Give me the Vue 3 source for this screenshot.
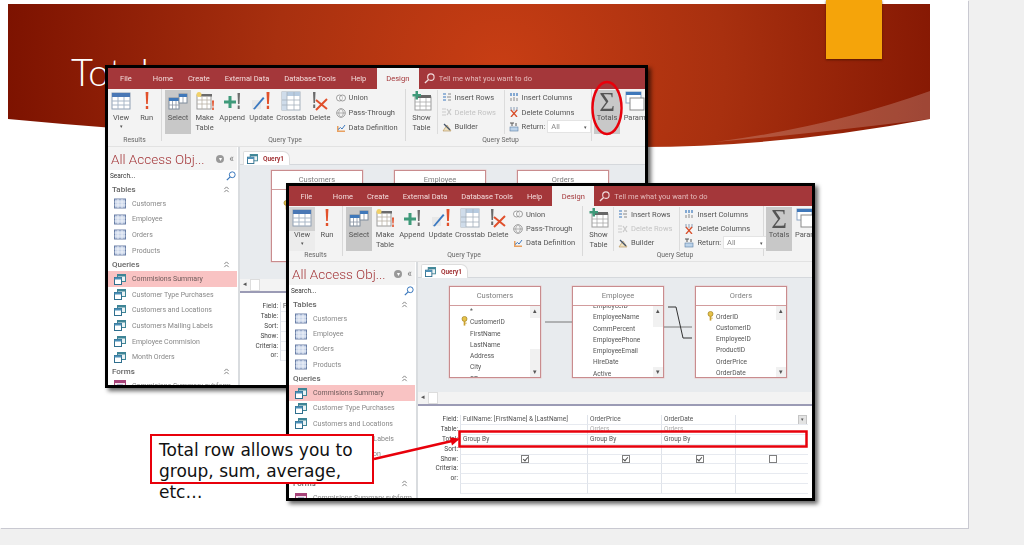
<template>
  <div class="page">
    <svg class="defs" width="0" height="0" aria-hidden="true">
      <symbol id="i-view" viewBox="0 0 20 20"><rect x="1" y="2" width="18" height="16" fill="#fff" stroke="#8f9fb3"/><rect x="1" y="2" width="18" height="4" fill="#4a78b5"/><path d="M1 10h18M1 14h18M7 6v12M13 6v12" stroke="#a9b7c7"/></symbol>
      <symbol id="i-run" viewBox="0 0 20 20"><path d="M8.6 1h2.8l-.6 12H9.2z" fill="#e2512b"/><rect x="8.8" y="15" width="2.4" height="3" fill="#e2512b"/></symbol>
      <symbol id="i-select" viewBox="0 0 20 20"><rect x="1" y="7" width="10" height="11" fill="#fff" stroke="#7f8c9b"/><rect x="1" y="7" width="10" height="3" fill="#3f78ba"/><path d="M4.500 10v8M8 10v8M1 14h10" stroke="#8a96a3" stroke-width=".8"/><rect x="11" y="3" width="8" height="9" fill="#fff" stroke="#7f8c9b"/><rect x="11" y="3" width="8" height="3" fill="#3f78ba"/><path d="M15 6v6" stroke="#8a96a3" stroke-width=".8"/></symbol>
      <symbol id="i-make" viewBox="0 0 20 20"><rect x="2" y="4" width="14" height="14" fill="#fff" stroke="#9b9b9b"/><rect x="5" y="3" width="12" height="2.500" fill="#6b6b6b"/><path d="M2 9h14M2 13h14M7 5v13M12 5v13" stroke="#b9b1a4" stroke-width=".8"/><circle cx="4" cy="3.500" r="2.500" fill="#f1d169"/><path d="M17 9.500h2l-.4 6h-1.200zM17.200 16.500h1.600V19h-1.600z" fill="#e2512b"/></symbol>
      <symbol id="i-append" viewBox="0 0 20 20"><path d="M6.500 5h3v4.500H14v3H9.500V17h-3v-4.500H2v-3h4.500z" fill="#3f9a7a"/><path d="M15.500 2h2.500l-.5 11h-1.500zM15.700 14.500h2V18h-2z" fill="#6d6d6d"/></symbol>
      <symbol id="i-update" viewBox="0 0 20 20"><rect x="1" y="9" width="9" height="9" fill="#e8e8e8"/><path d="M2 18L12 6l1.500 1.300L3.800 18.500z" fill="#3a78c0"/><path d="M15.500 1h3l-.6 12h-1.800zM15.800 14.800h2.300V18h-2.300z" fill="#e2512b"/></symbol>
      <symbol id="i-cross" viewBox="0 0 20 20"><rect x="1" y="1" width="18" height="18" fill="#fff" stroke="#a6b1bd"/><rect x="1" y="1" width="18" height="4" fill="#b7cbe0"/><rect x="1" y="1" width="5" height="18" fill="#cfdcea"/><path d="M1 9h18M1 14h18M6 1v18M13 1v18" stroke="#a6b1bd" stroke-width=".8"/></symbol>
      <symbol id="i-delete" viewBox="0 0 20 20"><path d="M3 1h2.500L5 12H3.500zM3.200 13.500h2V17h-2z" fill="#6a6a6a"/><path d="M6 9l11 9M17 8L6 19" stroke="#e0502c" stroke-width="2"/></symbol>
      <symbol id="i-union" viewBox="0 0 10 10"><circle cx="3.500" cy="5" r="3" fill="#fff" stroke="#888" stroke-width=".8"/><circle cx="6.500" cy="5" r="3" fill="#fff" fill-opacity=".4" stroke="#888" stroke-width=".8"/></symbol>
      <symbol id="i-pass" viewBox="0 0 10 10"><circle cx="5" cy="5" r="4.300" fill="#f1f1f1" stroke="#8b8b8b" stroke-width=".8"/><path d="M.700 5h8.600M5 .700c-3 2.500-3 6 0 8.600M5 .700c3 2.500 3 6 0 8.600" stroke="#8b8b8b" fill="none" stroke-width=".6"/></symbol>
      <symbol id="i-def" viewBox="0 0 10 10"><path d="M1 9V3h1.500v4.500H9V9z" fill="#e8a060"/><path d="M2 6.500L4.500 4.500 6 6l3-4" stroke="#3b78bd" fill="none"/></symbol>
      <symbol id="i-show" viewBox="0 0 20 20"><rect x="3" y="6" width="16" height="13" fill="#fff" stroke="#9d9d9d"/><rect x="6" y="4" width="13" height="3" fill="#666"/><path d="M3 11h16M3 15h16M8 7v12M14 7v12" stroke="#a9a9a9" stroke-width=".8"/><path d="M3.500 0h2.500v3h3v2.500H6v3H3.500v-3h-3V3h3z" fill="#3f9a7a"/></symbol>
      <symbol id="i-insrow" viewBox="0 0 10 10"><path d="M1 2h3M1 5h3M1 8h3" stroke="#3a78bd" stroke-width="1.200"/><path d="M9 2H6M9 5H5M9 8H6" stroke="#8a8a8a"/></symbol>
      <symbol id="i-delrow" viewBox="0 0 10 10"><path d="M0 2h4M0 5h4M0 8h4" stroke="#ccc" stroke-width="1.200"/><path d="M5 2l4 6M9 2L5 8" stroke="#c8c8c8" stroke-width="1.200"/></symbol>
      <symbol id="i-builder" viewBox="0 0 10 10"><path d="M1 9l4-6 4 6z" fill="#efe2c0" stroke="#b38f52" stroke-width=".6"/><path d="M2 2l6 6" stroke="#44546a" stroke-width="1.200"/></symbol>
      <symbol id="i-inscol" viewBox="0 0 10 10"><path d="M2 1v3M5 1v3M8 1v3" stroke="#3a78bd" stroke-width="1.200"/><path d="M2 6v3M8 6v3M5 5v4" stroke="#8a8a8a"/></symbol>
      <symbol id="i-delcol" viewBox="0 0 10 10"><path d="M2 0v4M5 0v4M8 0v4" stroke="#8a9fb8"/><path d="M2 3l6 7M8 3l-6 7" stroke="#d8502c" stroke-width="1.300"/></symbol>
      <symbol id="i-ret" viewBox="0 0 10 10"><path d="M1 1h4M3 1v3" stroke="#555" stroke-width="1"/><rect x="1" y="5" width="8" height="4" fill="#bcd3ea" stroke="#5b7fa6" stroke-width=".6"/><path d="M7 1v3" stroke="#555"/></symbol>
      <symbol id="i-param" viewBox="0 0 20 20"><rect x="1" y="1" width="15" height="11" fill="#fff" stroke="#8da6c4"/><rect x="1" y="1" width="15" height="3" fill="#3f78ba"/><rect x="5" y="7" width="14" height="12" fill="#fff" stroke="#8a8a8a"/></symbol>
      <symbol id="i-nav-table" viewBox="0 0 12 10"><rect x=".5" y=".5" width="11" height="9" fill="#c9d5ea" stroke="#6a7fa6"/><path d="M4 .500v9M8 .500v9M.500 3.500h11M.500 6.500h11" stroke="#f4f6fa" stroke-width=".8"/></symbol>
      <symbol id="i-nav-query" viewBox="0 0 12 11"><rect x="3.500" y=".5" width="8" height="7" fill="#eaf2f4" stroke="#3f8596"/><rect x="3.500" y=".5" width="8" height="2" fill="#3f8596"/><rect x=".5" y="3.500" width="7" height="7" fill="#fff" stroke="#2f6f8e"/><rect x=".5" y="3.500" width="7" height="2" fill="#4c90b8"/></symbol>
      <symbol id="i-nav-form" viewBox="0 0 12 11"><rect x=".5" y=".5" width="11" height="10" fill="#f3e3ec" stroke="#a8447a"/><rect x=".5" y=".5" width="11" height="2.500" fill="#a8447a"/><path d="M3 5h6M3 7.500h6" stroke="#6c7fb0"/></symbol>
      <symbol id="i-key" viewBox="0 0 8 12"><circle cx="4" cy="3.500" r="3" fill="#e6c24a" stroke="#9c7d1e" stroke-width=".8"/><rect x="3" y="6" width="2" height="5.500" fill="#c9a02f"/><rect x="5" y="8" width="1.500" height="1.200" fill="#c9a02f"/></symbol>
      <symbol id="i-search" viewBox="0 0 12 12"><circle cx="7.500" cy="4.500" r="3.500" fill="none" stroke="currentColor" stroke-width="1.200"/><path d="M5 7L1 11" stroke="currentColor" stroke-width="1.500"/></symbol>
      <symbol id="i-fold" viewBox="0 0 8 8"><path d="M1.500 3.500L4 1l2.500 2.500M1.500 7L4 4.500 6.500 7" fill="none" stroke="#777" stroke-width="1"/></symbol>
    </svg>

    <div class="slide">
      <svg class="banner" width="968" height="160" viewBox="0 0 968 160">
        <defs>
          <radialGradient id="bannerFill" gradientUnits="userSpaceOnUse" cx="500" cy="70" r="500">
            <stop offset="0" stop-color="#c83e14" />
            <stop offset=".45" stop-color="#a8300f" />
            <stop offset="1" stop-color="#7c1200" />
          </radialGradient>
        </defs>
        <path d="M8 4H930V119Q780 147 640 147Q300 147 8 119Z" fill="url(#bannerFill)" />
        <path d="M930 91Q830 127 715 142Q800 135 930 119Z" fill="#fff" fill-opacity=".2" />
      </svg>
      <h1 class="slide-title">Totals</h1>
      <div class="bookmark"></div>

      <section v-for="win in windows" :key="win.id" class="win" :class="win.id">
        <div class="menubar">
          <span v-for="tab in menuTabs" :key="tab" class="menu-tab">{{ tab }}</span>
          <span class="menu-tab active">Design</span>
          <span class="tell">
            <svg class="tell-icon" width="11" height="11"><use href="#i-search" /></svg>
            Tell me what you want to do
          </span>
        </div>

        <div class="ribbon">
          <div v-for="group in ribbonGroups" :key="group.name + group.cls" class="group" :class="group.cls">
            <div class="group-items">
              <template v-for="item in group.items" :key="item.label || item.rows[0].label">
                <div v-if="item.rows" class="small-col" :class="item.cls">
                  <div v-for="row in item.rows" :key="row.label" class="small-row" :class="{ off: row.off }">
                    <svg width="10" height="10"><use :href="'#' + row.icon" /></svg>
                    <span>{{ row.label }}</span>
                    <span v-if="row.combo" class="combo">All<i>▾</i></span>
                  </div>
                </div>
                <button v-else class="big" :class="{ on: item.on, split: item.menu }" :style="{ width: item.w + 'px' }">
                  <span v-if="item.sigma" class="sigma">Σ</span>
                  <svg v-else width="20" height="20"><use :href="'#' + item.icon" /></svg>
                  <span class="big-label">{{ item.label }}<br v-if="item.second" />{{ item.second }}</span>
                  <i v-if="item.menu" class="caret">▾</i>
                </button>
              </template>
            </div>
            <div class="group-name">{{ group.name }}</div>
          </div>
        </div>

        <div class="body">
          <aside class="nav">
            <div class="nav-head">
              <span class="nav-title">All Access Obj...</span>
              <span class="nav-dot">▾</span>
              <span class="nav-collapse">«</span>
            </div>
            <div class="nav-search">
              <span>Search...</span>
              <svg width="10" height="10"><use href="#i-search" /></svg>
            </div>
            <template v-for="section in navSections" :key="section.name">
              <div class="nav-section">
                <span>{{ section.name }}</span>
                <svg width="7" height="7"><use href="#i-fold" /></svg>
              </div>
              <div
                v-for="obj in section.items"
                :key="obj"
                class="nav-item"
                :class="{ current: obj === 'Commisions Summary' }"
              >
                <svg width="12" height="11"><use :href="'#' + section.icon" /></svg>
                <span>{{ obj }}</span>
              </div>
            </template>
          </aside>

          <div class="main">
            <div class="tabstrip">
              <div class="doc-tab">
                <svg width="11" height="10"><use href="#i-nav-query" /></svg>
                <span>Query1</span>
              </div>
            </div>

            <div class="canvas">
              <div v-for="table in queryTables" :key="table.name" class="qtable">
                <div class="qtable-title">{{ table.name }}</div>
                <div class="qtable-body">
                  <ul class="fields" :style="{ marginTop: table.offset + 'px' }">
                    <li v-for="f in table.fields" :key="f">
                      <svg v-if="f === table.key" class="key" width="7" height="10"><use href="#i-key" /></svg>
                      {{ f }}
                    </li>
                  </ul>
                  <div class="vscroll">
                    <span class="arrow">▴</span>
                    <span class="thumb" :class="table.thumb"></span>
                    <span class="arrow">▾</span>
                  </div>
                </div>
              </div>
              <svg class="joins" width="400" height="110" viewBox="0 0 400 110">
                <path d="M127 44H154M246 49H274" fill="none" stroke="#777" stroke-width="1" />
                <path d="M250 29H258L265 60H274" fill="none" stroke="#333" stroke-width="1" />
              </svg>
            </div>

            <div class="hscroll"><span class="arrow">◂</span><span class="hthumb"></span></div>

            <div class="qbe">
              <div v-for="row in win.rows" :key="row.label" class="qbe-row">
                <span class="qbe-label">{{ row.label }}</span>
                <span v-for="(cell, i) in 4" :key="cell" class="qbe-cell" :class="{ dim: row.dim }">
                  <span v-if="row.checks" class="check" :class="{ checked: row.checks[i] }"></span>
                  <template v-else>{{ row.cells ? row.cells[i] : '' }}</template>
                  <i v-if="row.drop && i === 3" class="drop">▾</i>
                </span>
              </div>
            </div>
          </div>
        </div>
      </section>

      <svg class="marks" width="968" height="528" viewBox="0 0 968 528">
        <ellipse cx="607" cy="108" rx="14.500" ry="26" fill="none" stroke="#e8000b" stroke-width="2.500" />
        <rect x="459.500" y="431.500" width="347" height="15" fill="none" stroke="#e8000b" stroke-width="2.500" />
        <path d="M374 459L452 441" stroke="#e8000b" stroke-width="2.500" />
        <path d="M460 438.500L450 437.500L452 445.500Z" fill="#e8000b" />
      </svg>
      <div class="callout">Total row allows you to group, sum, average, etc…</div>
    </div>
  </div>
</template>

<script setup>
const menuTabs = ['File', 'Home', 'Create', 'External Data', 'Database Tools', 'Help']

const ribbonGroups = [
  {
    name: 'Results',
    cls: 'g-results',
    items: [
      { label: 'View', icon: 'i-view', w: 26, menu: true },
      { label: 'Run', icon: 'i-run', w: 22 }
    ]
  },
  {
    name: 'Query Type',
    cls: 'g-type',
    items: [
      { label: 'Select', icon: 'i-select', w: 26, on: true },
      { label: 'Make', second: 'Table', icon: 'i-make', w: 24 },
      { label: 'Append', icon: 'i-append', w: 28 },
      { label: 'Update', icon: 'i-update', w: 27 },
      { label: 'Crosstab', icon: 'i-cross', w: 30 },
      { label: 'Delete', icon: 'i-delete', w: 24 },
      {
        rows: [
          { label: 'Union', icon: 'i-union' },
          { label: 'Pass-Through', icon: 'i-pass' },
          { label: 'Data Definition', icon: 'i-def' }
        ]
      }
    ]
  },
  {
    name: 'Query Setup',
    cls: 'g-setup',
    items: [
      { label: 'Show', second: 'Table', icon: 'i-show', w: 23 },
      {
        cls: 'divided',
        rows: [
          { label: 'Insert Rows', icon: 'i-insrow' },
          { label: 'Delete Rows', icon: 'i-delrow', off: true },
          { label: 'Builder', icon: 'i-builder' }
        ]
      },
      {
        cls: 'divided',
        rows: [
          { label: 'Insert Columns', icon: 'i-inscol' },
          { label: 'Delete Columns', icon: 'i-delcol' },
          { label: 'Return:', icon: 'i-ret', combo: true }
        ]
      }
    ]
  },
  {
    name: '',
    cls: 'g-show',
    items: [
      { label: 'Totals', sigma: true, w: 26, on: true },
      { label: 'Param', icon: 'i-param', w: 26 }
    ]
  }
]

const navSections = [
  { name: 'Tables', icon: 'i-nav-table', items: ['Customers', 'Employee', 'Orders', 'Products'] },
  {
    name: 'Queries',
    icon: 'i-nav-query',
    items: [
      'Commisions Summary',
      'Customer Type Purchases',
      'Customers and Locations',
      'Customers Mailing Labels',
      'Employee Commision',
      'Month Orders'
    ]
  },
  { name: 'Forms', icon: 'i-nav-form', items: ['Commisions Summary subform'] }
]

const queryTables = [
  {
    name: 'Customers',
    offset: 0,
    key: 'CustomerID',
    thumb: 'thumb-top',
    fields: ['*', 'CustomerID', 'FirstName', 'LastName', 'Address', 'City', 'ST']
  },
  {
    name: 'Employee',
    offset: -5,
    key: '',
    thumb: 'thumb-low',
    fields: ['EmployeeID', 'EmployeeName', 'CommPercent', 'EmployeePhone', 'EmployeeEmail', 'HireDate', 'Active']
  },
  {
    name: 'Orders',
    offset: 5.5,
    key: 'OrderID',
    thumb: 'thumb-full',
    fields: ['OrderID', 'CustomerID', 'EmployeeID', 'ProductID', 'OrderPrice', 'OrderDate']
  }
]

const fieldRow = { label: 'Field:', cells: ['FullName: [FirstName] & [LastName]', 'OrderPrice', 'OrderDate', ''], drop: true }
const tableRow = { label: 'Table:', cells: ['', 'Orders', 'Orders', ''], dim: true }
const totalRow = { label: 'Total:', cells: ['Group By', 'Group By', 'Group By', ''] }
const sortRow = { label: 'Sort:' }
const showRow = { label: 'Show:', checks: [true, true, true, false] }
const criteriaRow = { label: 'Criteria:' }
const orRow = { label: 'or:' }

const windows = [
  { id: 'win-back', rows: [fieldRow, tableRow, sortRow, showRow, criteriaRow, orRow] },
  { id: 'win-front', rows: [fieldRow, tableRow, totalRow, sortRow, showRow, criteriaRow, orRow, { label: '' }] }
]
</script>

<style scoped>
.page {
  position: relative;
  width: 1024px;
  height: 545px;
  overflow: hidden;
  background: #f0f0f0;
  font-family: Roboto, "Liberation Sans", sans-serif;
}

.defs {
  position: absolute;
}

.slide {
  position: relative;
  width: 968px;
  height: 528px;
  background: #fff;
  box-shadow: 1px 1px 0 #c9c9d1;
}

.banner {
  position: absolute;
  left: 0;
  top: 0;
}

.slide-title {
  position: absolute;
  left: 71px;
  top: 48px;
  margin: 0;
  font-family: Lato, "Open Sans", sans-serif;
  font-size: 38px;
  font-weight: 300;
  color: #fff;
}

.bookmark {
  position: absolute;
  left: 826px;
  top: 0;
  width: 56px;
  height: 59px;
  background: #f5a40a;
  box-shadow: 0 1px 2px rgba(70, 20, 0, 0.8);
}

/* the two pasted Access screenshots */
.win {
  position: absolute;
  box-sizing: border-box;
  display: flex;
  flex-direction: column;
  overflow: hidden;
  border: 3px solid #000;
  background: #f3f3f3;
  color: #555;
  font-size: 7.5px;
  filter: blur(0.4px) drop-shadow(3px 3px 2px rgba(0, 0, 0, 0.6));
}

.win-back {
  left: 105px;
  top: 65px;
  width: 543px;
  height: 323px;
  --bar: 21px;
  --ribbon: 58px;
  --strip: 18px;
  --nav: 132px;
  --item: 15.6px;
  --small: 15px;
  --gap: 1.6px;
  --g1: 54px;
  --g2: 244px;
  --g3: 186px;
  --card-top: 5px;
  --qbe-top: 9px;
  --label: 40px;
  --tab-pad: 7.5px;
}

.win-front {
  left: 286px;
  top: 183px;
  width: 529px;
  height: 318px;
  --bar: 20px;
  --ribbon: 56px;
  --strip: 16px;
  --nav: 129px;
  --item: 15.35px;
  --small: 14.4px;
  --gap: 1px;
  --g1: 54px;
  --g2: 240px;
  --g3: 181px;
  --card-top: 8px;
  --qbe-top: 9px;
  --label: 42px;
  --tab-pad: 7px;
}

.menubar {
  flex: none;
  height: var(--bar);
  display: flex;
  align-items: center;
  padding-left: 4.5px;
  background: #a4373a;
  color: #f3dcdc;
}

.menu-tab {
  padding: 0 var(--tab-pad);
  white-space: nowrap;
}

.menu-tab:nth-child(1) {
  padding-right: 13.5px;
}

.menu-tab.active {
  align-self: stretch;
  display: flex;
  align-items: center;
  margin-left: 3px;
  padding: 0 9.5px;
  background: #f3f3f3;
  color: #a4373a;
}

.tell {
  display: flex;
  align-items: center;
  gap: 4px;
  margin-left: 5px;
  color: #e4baba;
}

.tell-icon {
  color: #f1dcdc;
}

.ribbon {
  flex: none;
  height: var(--ribbon);
  display: flex;
  border-bottom: 1px solid #e2e2e2;
  box-sizing: border-box;
}

.group {
  flex: none;
  display: flex;
  flex-direction: column;
  box-sizing: border-box;
  padding-top: 1px;
  border-right: 1px solid #d9d9d9;
  margin-bottom: 5px;
}

.g-results { width: var(--g1); }
.g-type { width: var(--g2); padding-left: 3px; }
.g-setup { width: var(--g3); padding-left: 4px; }
.g-show { flex: 1; border: 0; padding-left: 2px; }

.group-items {
  flex: 1;
  display: flex;
  gap: var(--gap);
  min-height: 0;
}

.group-name {
  flex: none;
  height: 9px;
  line-height: 9px;
  margin-bottom: -4px;
  font-size: 6.8px;
  text-align: center;
  color: #666;
}

.big {
  flex: none;
  height: 44px;
  display: flex;
  flex-direction: column;
  align-items: center;
  padding: 1px 0 0;
  border: 0;
  background: transparent;
  font: inherit;
  color: inherit;
}

.big.on {
  background: #c8c8c8;
}

.win-front .big.split {
  background: linear-gradient(#d2d2d2 24px, #ececec 24px);
}

.big-label {
  margin-top: 2px;
  line-height: 10px;
  white-space: nowrap;
}

.caret {
  font-size: 5px;
  line-height: 7px;
  font-style: normal;
}

.sigma {
  height: 20px;
  font-family: "Liberation Serif", serif;
  font-size: 27px;
  line-height: 22px;
  color: #555;
}

.small-col {
  display: flex;
  flex-direction: column;
  padding-left: 2px;
}

.small-col.divided {
  margin-left: 2px;
  padding-left: 4px;
  padding-right: 4px;
  height: 44px;
  border-left: 1px solid #dcdcdc;
}

.small-row {
  height: var(--small);
  display: flex;
  align-items: center;
  gap: 3px;
  white-space: nowrap;
}

.small-row.off {
  color: #c4c4c4;
}

.combo {
  display: inline-flex;
  justify-content: space-between;
  align-items: center;
  width: 44px;
  height: 13px;
  margin-left: -1px;
  padding: 0 3px;
  box-sizing: border-box;
  background: #fff;
  border: 1px solid #e4e4e4;
  color: #888;
}

.combo i {
  font-style: normal;
  font-size: 5px;
  color: #555;
}

.body {
  flex: 1;
  display: flex;
  min-height: 0;
}

.nav {
  flex: none;
  width: var(--nav);
  box-sizing: border-box;
  padding-right: 1px;
  background: #fff;
  border-right: 2px solid #d9dcdf;
  overflow: hidden;
}

.nav-head {
  height: 23px;
  display: flex;
  align-items: center;
  padding: 0 3px 0 3px;
  background: #f3f3f3;
}

.nav-title {
  flex: 1;
  font-size: 13.5px;
  font-weight: 300;
  color: #a4373a;
  white-space: nowrap;
}

.nav-dot {
  width: 8px;
  height: 8px;
  margin-right: 5px;
  border-radius: 50%;
  background: #999;
  color: #fff;
  font-size: 6px;
  line-height: 8px;
  text-align: center;
}

.nav-collapse {
  font-size: 10px;
  line-height: 10px;
  color: #777;
}

.nav-search {
  height: 12px;
  display: flex;
  align-items: center;
  justify-content: space-between;
  padding: 0 1px 0 2px;
  margin-bottom: 1px;
  font-size: 6.5px;
  color: #333;
}

.nav-search svg {
  color: #3a78bd;
}

.nav-section {
  height: 13px;
  display: flex;
  align-items: center;
  justify-content: space-between;
  padding: 0 7px 0 4px;
  font-size: 8px;
  font-weight: 500;
  color: #666;
}

.nav-item {
  height: var(--item);
  display: flex;
  align-items: center;
  gap: 6px;
  padding-left: 6px;
  font-size: 7px;
  color: #888;
  white-space: nowrap;
}

.nav-item.current {
  background: #f9c3c3;
  color: #6d5a5a;
}

.main {
  flex: 1;
  display: flex;
  flex-direction: column;
  min-width: 0;
}

.tabstrip {
  flex: none;
  height: var(--strip);
  display: flex;
  align-items: flex-end;
  padding-left: 3px;
  background: #f3f3f3;
  border-bottom: 1px solid #d5d8dc;
  box-sizing: border-box;
}

.doc-tab {
  display: flex;
  align-items: center;
  gap: 5px;
  width: 47px;
  height: 14px;
  margin-bottom: -1px;
  padding-left: 3px;
  box-sizing: border-box;
  background: #fff;
  border: 1px solid #ddd;
  border-bottom: 0;
  border-radius: 2px 7px 0 0;
  font-size: 6.5px;
  font-weight: 700;
  color: #a4373a;
}

.canvas {
  position: relative;
  flex: none;
  height: 114px;
  display: flex;
  gap: 31px;
  box-sizing: border-box;
  padding: var(--card-top) 0 0 31px;
  background: #e8ebee;
  overflow: hidden;
}

.qtable {
  flex: none;
  width: 92px;
  height: 92px;
  display: flex;
  flex-direction: column;
  box-sizing: border-box;
  background: #fff;
  border: 1px solid #c98c8e;
  box-shadow: 0 0 0 0.5px #e8c9ca;
}

.qtable-title {
  flex: none;
  height: 18px;
  line-height: 18px;
  border-bottom: 1px solid #d29c9d;
  text-align: center;
  color: #808080;
}

.qtable-body {
  flex: 1;
  display: flex;
  min-height: 0;
  overflow: hidden;
}

.fields {
  flex: 1;
  margin: 0;
  padding: 0 0 0 20px;
  list-style: none;
  font-size: 6.6px;
  color: #555;
}

.fields li {
  position: relative;
  height: 11.3px;
  line-height: 11.3px;
}

.key {
  position: absolute;
  left: -9px;
  top: -1px;
}

.vscroll {
  flex: none;
  width: 10px;
  display: flex;
  flex-direction: column;
  background: #f1f1f1;
}

.arrow {
  flex: none;
  height: 10px;
  font-size: 7px;
  line-height: 10px;
  text-align: center;
  color: #555;
}

.vscroll .thumb {
  flex: 1;
  display: block;
  background: #fff;
}

.thumb-top { margin: 2px 0 18px; }
.thumb-low { margin-top: 11px; }
.thumb-full { margin-top: 4px; }

.joins {
  position: absolute;
  left: 0;
  top: 0;
  pointer-events: none;
}

.win-back .joins {
  display: none;
}

.hscroll {
  flex: none;
  height: 12px;
  display: flex;
  align-items: stretch;
  background: #f3f3f3;
}

.hscroll .arrow {
  width: 10px;
  height: auto;
}

.hthumb {
  width: 10px;
  background: #fff;
  border: 1px solid #ddd;
  box-sizing: border-box;
}

.qbe {
  flex: 1;
  box-sizing: border-box;
  padding-top: var(--qbe-top);
  background: #fff;
  border-top: 2px solid #9b9bb5;
  font-size: 6.5px;
  color: #555;
}

.qbe-row {
  height: 9.9px;
  display: grid;
  grid-template-columns: var(--label) 127px 74px 74px 73px;
  line-height: 9.9px;
}

.qbe-label {
  padding-right: 2px;
  text-align: right;
  color: #444;
}

.qbe-cell {
  position: relative;
  padding-left: 2px;
  border-left: 1px solid #dfe3ea;
  border-bottom: 1px solid #e7eaf0;
  box-sizing: border-box;
  white-space: nowrap;
  overflow: hidden;
}

.qbe-cell.dim {
  color: #aaa;
}

.check {
  position: relative;
  display: block;
  width: 8px;
  height: 8px;
  margin: 0 auto;
  box-sizing: border-box;
  border: 1px solid #7f7f7f;
  background: #fff;
}

.check.checked::after {
  content: "";
  position: absolute;
  left: 1.5px;
  top: 0;
  width: 2px;
  height: 4px;
  border-right: 1px solid #555;
  border-bottom: 1px solid #555;
  transform: rotate(40deg);
}

.drop {
  position: absolute;
  right: 1px;
  top: 0;
  width: 7px;
  height: 8px;
  background: #e3e3e3;
  border: 1px solid #c5c5c5;
  font-size: 5px;
  font-style: normal;
  line-height: 7px;
  text-align: center;
}

.marks {
  position: absolute;
  left: 0;
  top: 0;
  pointer-events: none;
}

.callout {
  position: absolute;
  left: 150px;
  top: 434px;
  width: 224px;
  height: 50px;
  box-sizing: border-box;
  padding: 4px 6px 0 7px;
  background: #fff;
  border: 2px solid #e8000b;
  font-family: "DejaVu Sans", sans-serif;
  font-size: 17px;
  line-height: 21px;
  color: #111;
}
</style>

<style>
html,
body {
  margin: 0;
  background: #f0f0f0;
  overflow: hidden;
}
</style>
